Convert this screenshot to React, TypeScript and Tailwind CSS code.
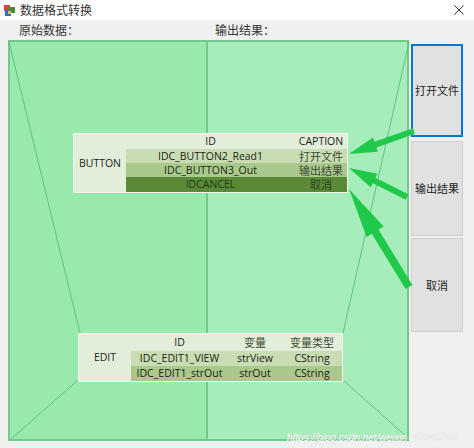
import React from "react";

type Pt = [number, number];

// arrow polygon from tail to tip, shaft width / head length / head width
const arrowPoints = (tail: Pt, tip: Pt, sw: number, hl: number, hw: number) => {
  const dx = tip[0] - tail[0];
  const dy = tip[1] - tail[1];
  const len = Math.hypot(dx, dy);
  const ux = dx / len;
  const uy = dy / len;
  const nx = -uy;
  const ny = ux;
  const bx = tip[0] - ux * hl;
  const by = tip[1] - uy * hl;
  const p: Pt[] = [
    [tail[0] + (nx * sw) / 2, tail[1] + (ny * sw) / 2],
    [bx + (nx * sw) / 2, by + (ny * sw) / 2],
    [bx + (nx * hw) / 2, by + (ny * hw) / 2],
    tip,
    [bx - (nx * hw) / 2, by - (ny * hw) / 2],
    [bx - (nx * sw) / 2, by - (ny * sw) / 2],
    [tail[0] - (nx * sw) / 2, tail[1] - (ny * sw) / 2],
  ];
  return p.map(([x, y]) => `${x.toFixed(1)},${y.toFixed(1)}`).join(" ");
};

const latin = "font-['Open_Sans','Noto_Sans_CJK_SC',sans-serif]";
const cjk = "font-['Noto_Sans_CJK_SC',sans-serif]";
const cell = "flex items-center justify-center leading-none overflow-hidden";

const AppIcon = () => (
  <svg width="13" height="13" viewBox="0 0 13 13">
    <rect x="1" y="1" width="6" height="6" fill="#d9443a" />
    <rect x="6" y="3" width="6" height="6" fill="#3f8f3c" />
    <rect x="2" y="6" width="6" height="6" fill="#2f6fc4" />
    <rect x="5" y="7" width="3" height="3" fill="#e9c13a" />
  </svg>
);

const ButtonTable = () => (
  <div
    className={`absolute left-[73px] top-[133px] w-[275px] h-[60px] bg-[#f2f7ee] p-[1px] grid grid-cols-[52px_169px_52px] grid-rows-[15px_14px_14px_15px] text-[10.5px] text-[#1a2414] ${latin}`}
  >
    <div className={`row-span-4 bg-[#e3eeda] ${cell}`}>BUTTON</div>
    <div className={`bg-[#e3eeda] ${cell}`}>ID</div>
    <div className={`bg-[#e3eeda] ${cell}`}>CAPTION</div>
    <div className={`bg-[#c9ddb4] ${cell}`}>IDC_BUTTON2_Read1</div>
    <div className={`bg-[#c9ddb4] ${cell} text-[11px] text-[#3d4a33] ${cjk}`}>打开文件</div>
    <div className={`bg-[#a9c98c] ${cell}`}>IDC_BUTTON3_Out</div>
    <div className={`bg-[#a9c98c] ${cell} text-[11px] text-[#3d4a33] ${cjk}`}>输出结果</div>
    <div className={`bg-[#5a8a38] ${cell} text-[#203a16]`}>IDCANCEL</div>
    <div className={`bg-[#5a8a38] ${cell} text-[11px] text-[#2a4520] ${cjk}`}>取消</div>
  </div>
);

const EditTable = () => (
  <div
    className={`absolute left-[78px] top-[333px] w-[265px] h-[49px] bg-[#f2f7ee] p-[1px] grid grid-cols-[52px_97px_54px_60px] grid-rows-[17px_15px_15px] text-[10.5px] text-[#1a2414] ${latin}`}
  >
    <div className={`row-span-3 bg-[#e3eeda] ${cell}`}>EDIT</div>
    <div className={`bg-[#e3eeda] ${cell}`}>ID</div>
    <div className={`bg-[#e3eeda] ${cell} text-[11px] text-[#3d4a33] ${cjk}`}>变量</div>
    <div className={`bg-[#e3eeda] ${cell} text-[11px] text-[#3d4a33] ${cjk}`}>变量类型</div>
    <div className={`bg-[#c9ddb4] ${cell}`}>IDC_EDIT1_VIEW</div>
    <div className={`bg-[#c9ddb4] ${cell}`}>strView</div>
    <div className={`bg-[#c9ddb4] ${cell}`}>CString</div>
    <div className={`bg-[#a9c98c] ${cell}`}>IDC_EDIT1_strOut</div>
    <div className={`bg-[#a9c98c] ${cell}`}>strOut</div>
    <div className={`bg-[#a9c98c] ${cell}`}>CString</div>
  </div>
);

const App: React.FC = () => {
  return (
    <div className={`relative w-[474px] h-[448px] overflow-hidden bg-[#f0f0f0] ${cjk}`}>
      {/* title bar */}
      <div className="h-[20px] bg-white flex items-center pl-[3px] pr-[10px]">
        <AppIcon />
        <span className="ml-[4px] text-[12px] text-[#333]">数据格式转换</span>
        <span className="ml-auto">
          <svg width="10" height="10" viewBox="0 0 10 10">
            <path d="M0.5 0.5L9.5 9.5M9.5 0.5L0.5 9.5" stroke="#333" strokeWidth="1" />
          </svg>
        </span>
      </div>

      <div className="flex pl-[8px]">
        <div className="w-[401px] flex flex-col">
          <div className="h-[20px] flex items-center text-[12px] text-[#333]">
            <span className="ml-[11px] w-[196px]">原始数据：</span>
            <span>输出结果：</span>
          </div>
          <div className="h-[401px] flex border-2 border-[#72c98b]">
            <div className="w-[198px] bg-[#99e9ad] border-r-2 border-[#72c98b]" />
            <div className="flex-1 bg-[#a6edbb]" />
          </div>
        </div>

        <div className="ml-[2px] mt-[24px] w-[52px] flex flex-col text-[11px] text-[#222]">
          <div className="h-[93px] bg-[#e1e1e1] border-2 border-[#0078d7] flex items-center justify-center">
            打开文件
          </div>
          <div className="mt-[4px] h-[95px] bg-[#e1e1e1] border border-[#cfcfcf] flex items-center justify-center">
            输出结果
          </div>
          <div className="mt-[2px] h-[94px] bg-[#e1e1e1] border border-[#cfcfcf] flex items-center justify-center">
            取消
          </div>
        </div>
      </div>

      {/* perspective lines in list boxes */}
      <svg className="absolute left-0 top-0 pointer-events-none" width="474" height="448">
        <path d="M9 42L80 333" stroke="#5cc47a" strokeWidth="1" fill="none" />
        <path d="M78 380L10 440" stroke="#5cc47a" strokeWidth="1" fill="none" />
        <path d="M409 42L343 333" stroke="#5cc47a" strokeWidth="1" fill="none" />
        <path d="M344 381L407 437" stroke="#5cc47a" strokeWidth="1" fill="none" />
      </svg>

      <ButtonTable />
      <EditTable />

      {/* annotation arrows */}
      <svg className="absolute left-0 top-0 pointer-events-none" width="474" height="448">
        <polygon points={arrowPoints([414, 131], [349, 154], 6, 28, 15)} fill="#20c94a" />
        <polygon points={arrowPoints([407, 197], [349, 168], 6, 28, 15)} fill="#20c94a" />
        <polygon points={arrowPoints([409, 287], [349, 189], 8, 50, 20)} fill="#20c94a" />
      </svg>

      <div className="absolute left-[287px] top-[430px] text-[10px] italic text-[#f4f4f4] font-['Liberation_Sans',sans-serif] [text-shadow:0_0_1px_#c8c8c8]">
        https://blog.csdn.net/weixin_42346202
      </div>
    </div>
  );
};

export default App;
